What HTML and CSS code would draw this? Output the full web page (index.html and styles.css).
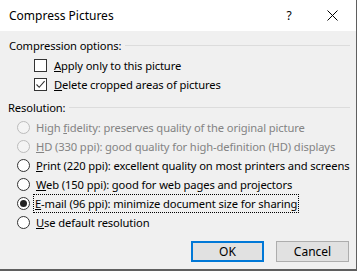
FILE: index.html
```html
<!DOCTYPE html>
<html>
<head>
<meta charset="utf-8">
<link rel="stylesheet" href="styles.css">
</head>
<body>
<div class="win">
  <div class="titlebar">
    <span class="title">Compress Pictures</span>
    <span class="help">?</span>
    <span class="close"><svg width="11" height="11" viewBox="0 0 11 11"><path d="M0.5 0.5L10.5 10.5M10.5 0.5L0.5 10.5" stroke="#000" stroke-width="1" fill="none"/></svg></span>
  </div>
  <div class="content">
    <div class="group-head"><span>Compression options:</span><span class="rule"></span></div>
    <div class="check-row"><span class="box"></span><span class="lbl"><u>A</u>pply only to this picture</span></div>
    <div class="check-row"><span class="box"><svg width="11" height="11" viewBox="0 0 11 11"><path d="M1.5 5.5L4.2 8.3L9.6 2.2" stroke="#333" stroke-width="1.1" fill="none"/></svg></span><span class="lbl"><u>D</u>elete cropped areas of pictures</span></div>
    <div class="group-head res"><span>Resolution:</span><span class="rule"></span></div>
    <div class="radio-row disabled"><span class="radio"></span><span class="lbl">High <u>f</u>idelity: preserves quality of the original picture</span></div>
    <div class="radio-row disabled"><span class="radio"></span><span class="lbl"><u>H</u>D (330 ppi): good quality for high-definition (HD) displays</span></div>
    <div class="radio-row"><span class="radio"></span><span class="lbl"><u>P</u>rint (220 ppi): excellent quality on most printers and screens</span></div>
    <div class="radio-row"><span class="radio"></span><span class="lbl"><u>W</u>eb (150 ppi): good for web pages and projectors</span></div>
    <div class="radio-row"><span class="radio on"></span><span class="lbl focus"><u>E</u>-mail (96 ppi): minimize document size for sharing</span></div>
    <div class="radio-row"><span class="radio"></span><span class="lbl"><u>U</u>se default resolution</span></div>
    <div class="buttons">
      <span class="btn default">OK</span>
      <span class="btn">Cancel</span>
    </div>
  </div>
</div>
</body>
</html>
```

FILE: styles.css
```css
* { box-sizing: border-box; }
html, body { margin: 0; padding: 0; }
body {
  width: 357px;
  height: 271px;
  background: #5f5f5f;
  overflow: hidden;
  font-family: "Noto Sans", "Open Sans", sans-serif;
  font-size: 11.2px;
  letter-spacing: -0.12px;
  color: #000;
}
.win {
  width: 356px;
  height: 269px;
  background: #f0f0f0;
  display: flex;
  flex-direction: column;
}
.titlebar {
  height: 31px;
  background: #fff;
  display: flex;
  align-items: center;
  padding-left: 9px;
  flex-shrink: 0;
}
.title { font-size: 12px; flex: 1; letter-spacing: 0; }
.help { width: 14px; font-size: 12px; margin-right: 31px; text-align: center; }
.close { width: 11px; height: 11px; margin-right: 18px; display: flex; }
.content {
  flex: 1;
  padding: 6px 6px 0 8px;
  display: flex;
  flex-direction: column;
}
.group-head {
  height: 16px;
  display: flex;
  align-items: center;
  padding-left: 1px;
}
.group-head.res { margin-top: 5px; padding-left: 0; }
.rule {
  flex: 1;
  height: 1px;
  background: #dcdcdc;
  margin-left: 4px;
}
.check-row {
  height: 19px;
  display: flex;
  align-items: center;
  padding-left: 26px;
}
.group-head + .check-row { margin-top: 3px; }
.box {
  flex-shrink: 0;
  width: 13px;
  height: 13px;
  border: 1px solid #333;
  background: #fff;
  margin-right: 7px;
  display: flex;
  align-items: center;
  justify-content: center;
}
.radio-row {
  height: 19px;
  display: flex;
  align-items: center;
  padding-left: 9px;
}
.group-head + .radio-row { margin-top: 3px; }
.radio {
  flex-shrink: 0;
  width: 13px;
  height: 13px;
  border: 1px solid #333;
  border-radius: 50%;
  background: #fff;
  margin-right: 6px;
  display: flex;
  align-items: center;
  justify-content: center;
}
.radio.on::after {
  content: "";
  width: 7px;
  height: 7px;
  border-radius: 50%;
  background: #222;
}
.disabled { color: #838383; }
.disabled .radio { border-color: #bcbcbc; background: #f4f4f4; }
.lbl { white-space: nowrap; }
.focus {
  outline: 1px dotted #000;
  outline-offset: 0;
  padding: 0 1px;
  margin-left: -2px;
  line-height: 17px;
}
.buttons {
  display: flex;
  justify-content: flex-end;
  gap: 12px;
  margin-top: 9px;
  padding-right: 1px;
}
.btn {
  width: 73px;
  height: 21px;
  border: 1px solid #adadad;
  background: #e1e1e1;
  display: flex;
  align-items: center;
  justify-content: center;
  font-size: 12px;
  letter-spacing: 0;
}
.btn.default { border: 2px solid #0078d7; }
```
